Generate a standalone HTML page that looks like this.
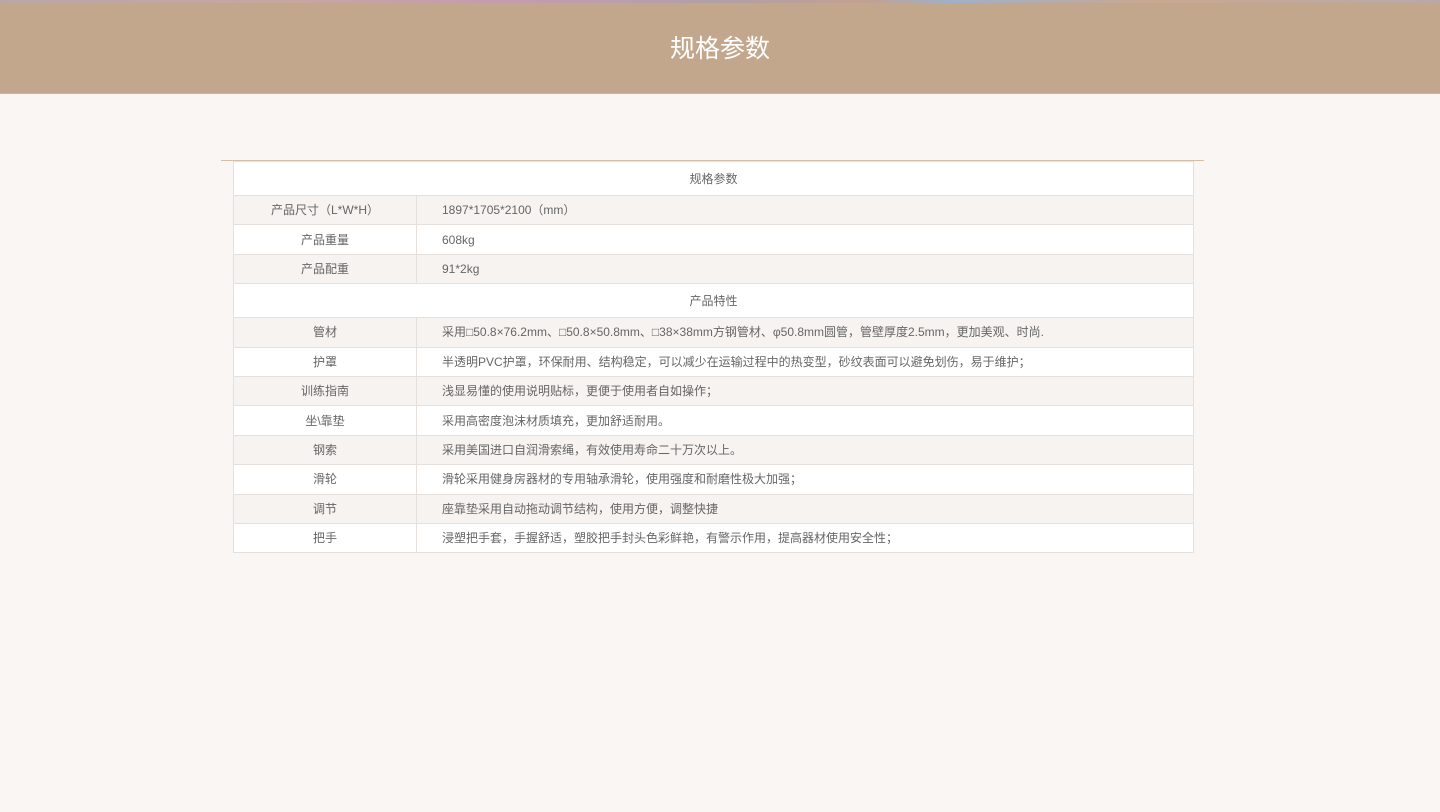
<!DOCTYPE html>
<html><head><meta charset="utf-8"><style>
body{margin:0;background:#f9f6f4;font-family:"Liberation Sans","Noto Sans CJK SC",sans-serif;width:1440px;height:812px;overflow:hidden;position:relative}
.strip{position:absolute;top:0;left:0;width:1440px;height:3px;background:linear-gradient(90deg,#b9a7a8,#c7a6a0 20%,#c59bb0 35%,#b0a0a8 50%,#c3a090 60%,#9fb0c8 66%,#c9a890 80%,#b8a9a8)}
.ban{position:absolute;top:3px;left:0;width:1440px;height:90px;background:#c3a78c;border-bottom:1px solid #cdb39c;color:#fff;font-size:25px;text-align:center;line-height:88px;font-family:"Noto Sans CJK SC",sans-serif}
.line{position:absolute;top:160px;left:221px;width:983px;height:1px;background:#d7bfa6}
table{position:absolute;top:161px;left:233px;width:961px;border-collapse:collapse;font-size:12px;color:#666}
td{border:1px solid #e6e0dc;height:28.4px;padding:0;line-height:14px}
td.k{width:182px;text-align:center}
td.v{padding-left:25px}
tr.h td{height:33px;text-align:center;background:#fff}
tr.g td{background:#f7f3f0}
tr.w td{background:#fff}
</style></head><body>
<div class="strip"></div>
<div class="ban">规格参数</div>
<div class="line"></div>
<table>
<tr class="h"><td colspan="2">规格参数</td></tr>
<tr class="g"><td class="k">产品尺寸（L*W*H）</td><td class="v">1897*1705*2100（mm）</td></tr>
<tr class="w"><td class="k">产品重量</td><td class="v">608kg</td></tr>
<tr class="g"><td class="k">产品配重</td><td class="v">91*2kg</td></tr>
<tr class="h"><td colspan="2">产品特性</td></tr>
<tr class="g"><td class="k">管材</td><td class="v">采用□50.8×76.2mm、□50.8×50.8mm、□38×38mm方钢管材、φ50.8mm圆管，管壁厚度2.5mm，更加美观、时尚.</td></tr>
<tr class="w"><td class="k">护罩</td><td class="v">半透明PVC护罩，环保耐用、结构稳定，可以减少在运输过程中的热变型，砂纹表面可以避免划伤，易于维护；</td></tr>
<tr class="g"><td class="k">训练指南</td><td class="v">浅显易懂的使用说明贴标，更便于使用者自如操作；</td></tr>
<tr class="w"><td class="k">坐\靠垫</td><td class="v">采用高密度泡沫材质填充，更加舒适耐用。</td></tr>
<tr class="g"><td class="k">钢索</td><td class="v">采用美国进口自润滑索绳，有效使用寿命二十万次以上。</td></tr>
<tr class="w"><td class="k">滑轮</td><td class="v">滑轮采用健身房器材的专用轴承滑轮，使用强度和耐磨性极大加强；</td></tr>
<tr class="g"><td class="k">调节</td><td class="v">座靠垫采用自动拖动调节结构，使用方便，调整快捷</td></tr>
<tr class="w"><td class="k">把手</td><td class="v">浸塑把手套，手握舒适，塑胶把手封头色彩鲜艳，有警示作用，提高器材使用安全性；</td></tr>
</table>
</body></html>
